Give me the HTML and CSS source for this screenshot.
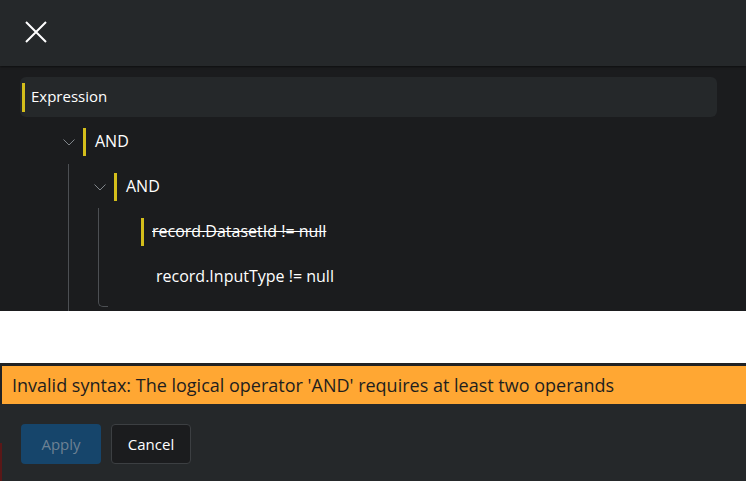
FILE: index.html
```html
<!DOCTYPE html>
<html>
<head>
<meta charset="utf-8">
<link rel="stylesheet" href="styles.css">
</head>
<body>
<div class="app">
  <header class="header">
    <button class="close" aria-label="Close">
      <svg width="22" height="22" viewBox="0 0 22 22"><path d="M1 1 L21 21 M21 1 L1 21" stroke="#fff" stroke-width="2" fill="none"/></svg>
    </button>
  </header>
  <section class="tree">
    <div class="root-row"><span class="bar"></span><span class="root-label">Expression</span></div>
    <div class="level1">
      <div class="row">
        <span class="chev"><svg width="12" height="7" viewBox="0 0 12 7"><polyline points="0.5,0.5 6,6 11.5,0.5" fill="none" stroke="#80858a" stroke-width="1"/></svg></span>
        <span class="bar"></span><span class="text">AND</span>
      </div>
      <div class="children guide-open">
        <div class="row">
          <span class="chev"><svg width="12" height="7" viewBox="0 0 12 7"><polyline points="0.5,0.5 6,6 11.5,0.5" fill="none" stroke="#80858a" stroke-width="1"/></svg></span>
          <span class="bar"></span><span class="text">AND</span>
        </div>
        <div class="children guide-closed">
          <div class="row leaf"><span class="bar"></span><span class="text strike">record.DatasetId != null</span></div>
          <div class="row leaf plain"><span class="text">record.InputType != null</span></div>
        </div>
      </div>
    </div>
  </section>
  <div class="gap"></div>
  <div class="banner">Invalid syntax: The logical operator 'AND' requires at least two operands</div>
  <footer class="footer">
    <span class="edge"></span>
    <button class="btn apply">Apply</button>
    <button class="btn cancel">Cancel</button>
  </footer>
</div>
</body>
</html>
```
FILE: styles.css
```css
* { box-sizing: border-box; }
html, body { margin: 0; padding: 0; background: #fff; }
body { font-family: "Open Sans", "Noto Sans", sans-serif; width: 746px; height: 481px; overflow: hidden; }
.app { width: 746px; }

.header {
  height: 66px;
  background: #25282a;
  display: flex;
  align-items: flex-start;
  padding: 21px 0 0 25px;
  position: relative;
  z-index: 2;
  box-shadow: 0 1px 2px rgba(0,0,0,0.5);
}
.close { background: none; border: 0; padding: 0; width: 22px; height: 22px; display: block; }
.close svg { display: block; }

.tree {
  height: 245px;
  background: #1b1c1e;
  overflow: hidden;
  padding: 11px 29px 0 20px;
  color: #fff;
}
.root-row {
  height: 40px;
  background: #25282a;
  border-radius: 6px;
  display: flex;
  align-items: center;
  padding-left: 2px;
}
.root-row .bar { height: 29px; }
.root-label { font-size: 15px; margin-left: 6px; position: relative; top: -1px; }

.bar { width: 3px; height: 28px; background: #d4be1b; flex: none; }
.level1 { padding-top: 2px; padding-left: 39px; }
.row { height: 45px; display: flex; align-items: center; }
.chev { width: 20px; display: flex; justify-content: center; padding-top: 1px; margin-right: 4px; }
.chev svg { display: block; }
.text { font-size: 16px; margin-left: 9px; position: relative; top: -1px; }
.children { margin-left: 9px; padding-left: 21px; }
.guide-open { border-left: 1px solid #4c4f53; padding-bottom: 30px; }
.guide-closed { position: relative; margin-left: 8px; padding-left: 43px; padding-bottom: 8px; border: 0; }
.guide-closed::before {
  content: "";
  position: absolute;
  left: 0; top: -1px; bottom: 0;
  width: 9px;
  border-left: 1px solid #4c4f53;
  border-bottom: 1px solid #4c4f53;
  border-bottom-left-radius: 5px;
}
.leaf .text { margin-left: 8px; }
.plain { padding-left: 15px; }
.plain .text { margin-left: 0; }
.strike { text-decoration: line-through; }

.gap { height: 52px; background: #fff; }

.banner {
  background: #ffa733;
  border-top: 3px solid #202224;
  border-left: 2px solid #202224;
  height: 41px;
  padding-left: 10px;
  display: flex;
  align-items: center;
  font-size: 18px;
  color: #1e1e1e;
}

.footer {
  height: 77px;
  background: #25282a;
  display: flex;
  align-items: flex-start;
  gap: 10px;
  padding: 20px 0 0 21px;
  position: relative;
}
.edge { position: absolute; left: 0; top: 39px; bottom: 0; width: 2px; background: #5a1818; }
.btn {
  width: 80px;
  height: 40px;
  border-radius: 4px;
  font-family: "Open Sans", "Noto Sans", sans-serif;
  font-size: 15px;
  padding: 0;
}
.apply { background: #16456b; border: 0; color: #6d8193; }
.cancel { background: #1b1c1e; border: 1px solid #3c3f42; color: #fff; }
```
